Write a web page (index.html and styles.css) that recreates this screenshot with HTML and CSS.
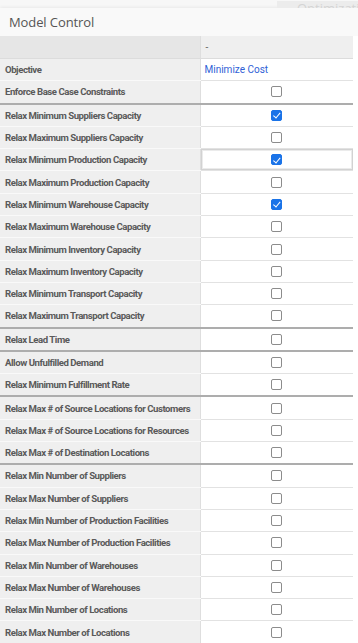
FILE: index.html
```html
<!DOCTYPE html>
<html>
<head>
<meta charset="utf-8">
<link rel="stylesheet" href="styles.css">
</head>
<body>
<div class="backdrop">
  <div class="tab">Optimizati</div>
</div>
<div class="panel">
  <div class="title">Model Control</div>
  <table class="grid">
    <colgroup><col class="c1"><col class="c2"></colgroup>
    <tr class="head"><th></th><th class="dash">-</th></tr>
    <tr><td class="lbl">Objective</td><td class="val"><span class="link">Minimize Cost</span></td></tr>
    <tr class="thick"><td class="lbl">Enforce Base Case Constraints</td><td class="cb"><span class="box"></span></td></tr>
    <tr><td class="lbl">Relax Minimum Suppliers Capacity</td><td class="cb"><span class="box on"></span></td></tr>
    <tr><td class="lbl">Relax Maximum Suppliers Capacity</td><td class="cb"><span class="box"></span></td></tr>
    <tr><td class="lbl">Relax Minimum Production Capacity</td><td class="cb sel"><span class="box on"></span></td></tr>
    <tr><td class="lbl">Relax Maximum Production Capacity</td><td class="cb"><span class="box"></span></td></tr>
    <tr><td class="lbl">Relax Minimum Warehouse Capacity</td><td class="cb"><span class="box on"></span></td></tr>
    <tr><td class="lbl">Relax Maximum Warehouse Capacity</td><td class="cb"><span class="box"></span></td></tr>
    <tr><td class="lbl">Relax Minimum Inventory Capacity</td><td class="cb"><span class="box"></span></td></tr>
    <tr><td class="lbl">Relax Maximum Inventory Capacity</td><td class="cb"><span class="box"></span></td></tr>
    <tr><td class="lbl">Relax Minimum Transport Capacity</td><td class="cb"><span class="box"></span></td></tr>
    <tr class="thick"><td class="lbl">Relax Maximum Transport Capacity</td><td class="cb"><span class="box"></span></td></tr>
    <tr class="thick"><td class="lbl">Relax Lead Time</td><td class="cb"><span class="box"></span></td></tr>
    <tr><td class="lbl">Allow Unfulfilled Demand</td><td class="cb"><span class="box"></span></td></tr>
    <tr class="thick"><td class="lbl">Relax Minimum Fulfillment Rate</td><td class="cb"><span class="box"></span></td></tr>
    <tr><td class="lbl">Relax Max # of Source Locations for Customers</td><td class="cb"><span class="box"></span></td></tr>
    <tr><td class="lbl">Relax Max # of Source Locations for Resources</td><td class="cb"><span class="box"></span></td></tr>
    <tr class="thick"><td class="lbl">Relax Max # of Destination Locations</td><td class="cb"><span class="box"></span></td></tr>
    <tr><td class="lbl">Relax Min Number of Suppliers</td><td class="cb"><span class="box"></span></td></tr>
    <tr><td class="lbl">Relax Max Number of Suppliers</td><td class="cb"><span class="box"></span></td></tr>
    <tr><td class="lbl">Relax Min Number of Production Facilities</td><td class="cb"><span class="box"></span></td></tr>
    <tr><td class="lbl">Relax Max Number of Production Facilities</td><td class="cb"><span class="box"></span></td></tr>
    <tr><td class="lbl">Relax Min Number of Warehouses</td><td class="cb"><span class="box"></span></td></tr>
    <tr><td class="lbl">Relax Max Number of Warehouses</td><td class="cb"><span class="box"></span></td></tr>
    <tr><td class="lbl">Relax Min Number of Locations</td><td class="cb"><span class="box"></span></td></tr>
    <tr><td class="lbl">Relax Max Number of Locations</td><td class="cb"><span class="box"></span></td></tr>
  </table>
</div>
</body>
</html>
```
FILE: styles.css
```css
html, body {
  margin: 0;
  padding: 0;
  background: #ffffff;
  overflow: hidden;
}
body {
  font-family: Roboto, "Liberation Sans", sans-serif;
}
.backdrop {
  height: 8px;
  background: #f7f7f7;
  display: flex;
  justify-content: flex-end;
  overflow: hidden;
}
.tab {
  width: 81px;
  background: #ececec;
  color: #d4d4d4;
  font-family: "Open Sans", sans-serif;
  font-size: 13px;
  line-height: 14px;
  padding-left: 20px;
  box-sizing: border-box;
  margin-top: 1px;
  white-space: nowrap;
  overflow: hidden;
}
.panel {
  background: #fff;
  box-shadow: 0 -1px 3px rgba(0,0,0,0.06);
}
.title {
  height: 28px;
  background: #f9f9f9;
  color: #555;
  font-family: "Open Sans", sans-serif;
  font-size: 13px;
  line-height: 28px;
  padding-left: 9px;
  letter-spacing: -0.1px;
}
.grid {
  border-collapse: collapse;
  width: 353px;
  table-layout: fixed;
}
.c1 { width: 200px; }
.c2 { width: 153px; }
.grid td, .grid th {
  padding: 0;
  height: 21.3px;
  border-bottom: 1px solid #e2e2e2;
}
.head th {
  height: 22px;
  background: #e6e6e6;
  border-bottom: 1px solid #dcdcdc;
  font-weight: normal;
}
.head th.dash {
  background: #efefef;
  text-align: left;
  padding-left: 5px;
  color: #666;
  font-size: 10px;
  border-left: 1px solid #dedede;
}
.lbl {
  background: #efefef;
  color: #5a5a5a;
  font-size: 9.6px;
  font-weight: 700;
  letter-spacing: -0.45px;
  padding-left: 5px !important;
  white-space: nowrap;
  overflow: hidden;
  border-right: 1px solid #dedede;
  border-bottom-color: #f9f9f9 !important;
}
.val {
  padding-left: 4px !important;
  font-size: 10px;
}
.link {
  color: #2f5fd6;
}
.cb {
  text-align: center;
  line-height: 0;
}
.cb.sel {
  box-shadow: inset 0 0 0 1px #d2d2d2, inset 0 0 0 2px #ebebeb;
}
.thick td {
  border-bottom: 2px solid #adadad !important;
}
.box {
  display: inline-block;
  width: 9px;
  height: 9px;
  border: 1px solid #8c8c8c;
  border-radius: 2px;
  background: #fff;
  box-sizing: content-box;
  position: relative;
}
.box.on {
  background: #1a73e8;
  border-color: #1a73e8;
}
.box.on::after {
  content: "";
  position: absolute;
  left: 2.5px;
  top: 0.5px;
  width: 2.5px;
  height: 5.5px;
  border: solid #fff;
  border-width: 0 1.6px 1.6px 0;
  transform: rotate(40deg);
}
```
